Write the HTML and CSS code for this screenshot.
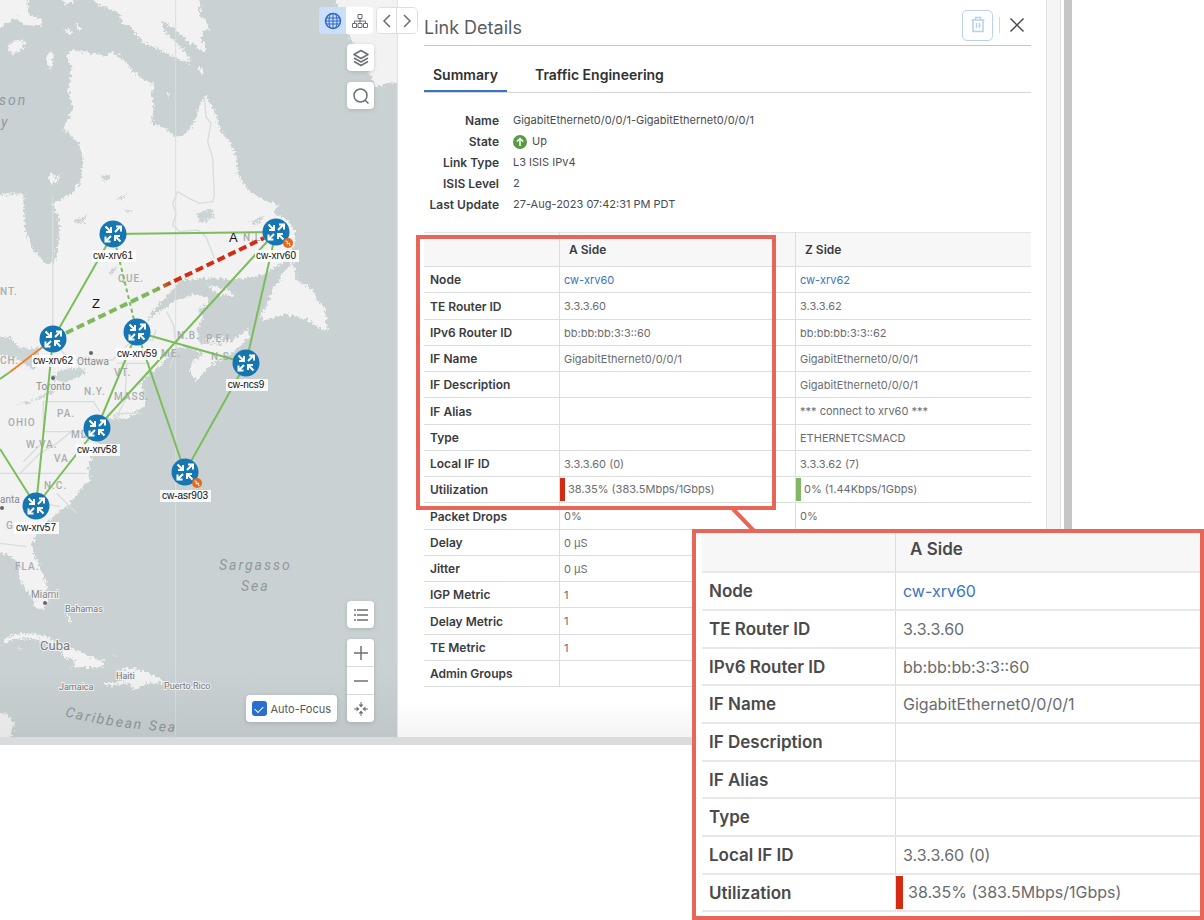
FILE: index.html
```html
<!DOCTYPE html>
<html lang="en">

<head>
    <meta charset="UTF-8">
    <meta name="viewport" content="width=device-width, initial-scale=1.0">
    <title>Link Details</title>
    <link rel="stylesheet" href="styles.css">
</head>

<body>
    <div class="app">
        <!-- Topology map -->
        <section class="map" aria-label="Topology map">
            <svg class="map-canvas" viewBox="0 0 398 737" preserveAspectRatio="xMinYMin slice">
                <defs>
                    <filter id="coast" x="0" y="0" width="100%" height="100%" color-interpolation-filters="sRGB">
                        <feTurbulence type="fractalNoise" baseFrequency="0.12" numOctaves="3" seed="4" />
                        <feDisplacementMap in="SourceGraphic" scale="24" xChannelSelector="R" yChannelSelector="G" />
                    </filter>
                    <linearGradient id="hot" gradientUnits="userSpaceOnUse" x1="53" y1="339" x2="276" y2="232">
                        <stop offset="0.46" stop-color="#7cb95c" />
                        <stop offset="0.53" stop-color="#d42c12" />
                    </linearGradient>
                    <linearGradient id="shade" x1="0" y1="0" x2="0" y2="1">
                        <stop offset="0" stop-color="#000" stop-opacity="0" />
                        <stop offset="1" stop-color="#000" stop-opacity="0.05" />
                    </linearGradient>
                    <symbol id="router" viewBox="-14 -14 28 28">
                        <circle r="13.5" fill="#1676b2" />
                        <g fill="none" stroke="#fff" stroke-width="2">
                            <path d="M-7.5-7.5l5 5M-2-7v5h-5" />
                            <path d="M2-2l5-5M3-7.5h5v5" />
                            <path d="M-2 2l-5 5M-7.5 2.5v5h5" />
                            <path d="M7.5 7.5l-5-5M2 7v-5h5" />
                        </g>
                    </symbol>
                    <symbol id="alarm" viewBox="-5 -5 10 10">
                        <circle r="5" fill="#e8681c" />
                        <path d="M-2.5-2l2 .5-.5 2.5 2.5-1 0 2.5M1 2l1.5.5" fill="none" stroke="#fff" stroke-width="1" />
                    </symbol>
                    <path id="caribbean" d="M65 716q50 14 130 17" />
                </defs>

                <!-- Land, drawn on a grid three times finer than the map -->
                <g transform="scale(.33333)">
                    <g class="land" filter="url(#coast)">
                        <path d="M-20-20H80L88 45 130 60 118 78 70 75 50 55 20 70-20 95zM165-20h70l-18 28-20 5z" />
                        <path d="M22 140l15-15 45-5-12 22-30 25zM137 175l12-20 12 10-5 30-8 15zM190 90l12-5 15 12-12 10zM226 72l8 0 10 15-10 2zM500 275l13 5-8 12zM590 203l15-3 8 20-8 2zM145 530l15-10 5 18 18-18-10 24-20 8z" />
                        <path d="M250-20L295 15 350 35 370 70 400 85 410 105 430 130 470 145 520 170 570 190 572 178 545 145 490 90 485 65 510 75 560 120 600 150 620 155 605 120 610 95 625 90 620 60 600 50 600-20z" />
                        <path d="M998-20L1020 40 1050 110 1090 190 1110 220 1128 265 1160 250 1200 245V-20z" />
                        <path d="M200 165L215 150 270 158 315 168 340 155 370 180 400 215 430 240 462 250 455 290 462 320 455 370 490 380 530 412 550 405 575 380 590 350 600 310 615 285 640 325 655 365 665 400 690 430 710 470 712 520 745 570 790 600 835 615 820 635 860 660 885 690 885 730 845 790 790 825 700 840 640 835 540 840 500 890 460 930 440 965 470 940 530 900 580 885 620 890 625 910 590 930 610 950 590 985 600 1030 660 1035 700 1020 740 990 750 1010 720 1040 680 1070 640 1090 610 1120 590 1140 570 1120 575 1090 610 1060 560 1040 520 1050 480 1100 440 1125 425 1150 435 1195 435 1220 400 1235 360 1245 320 1255 290 1305 290 1340 270 1380 265 1410 270 1440 250 1460 200 1520 170 1540 120 1590 95 1630 105 1670 120 1705 130 1725 140 1760 145 1800 130 1825 110 1830 95 1790 70 1760 55 1730 60 1690 40 1675 15 1660-20 1665V583H70L75 690 100 750 140 795 165 785 175 730 180 690 175 650 158 610 215 580 245 540 248 470 235 430 190 385 220 330 205 270 215 200z" />
                        <path d="M880 785L890 840 940 870 950 900 975 920 983 992 950 980 920 958 860 943 790 960 780 948 800 916 820 868 850 818zM620 855l70 15 12 20-52-10zM610 1018l50-5 30 12-40 8zM330 1258l50-18 40-3-40 16z" />
                        <path d="M5 1935L20 1910 70 1898 130 1905 190 1935 260 1965 320 1990 300 2002 215 2002 230 1980 190 1970 180 1945 120 1920 80 1915 40 1920z" />
                        <path d="M345 2010L400 2005 440 2015 480 2035 495 2050 440 2050 405 2070 390 2050 315 2058 315 2046 365 2045 370 2025zM530 2056l40 2 20 6-40 4zM195 1840l15 8 0 25-5-15zM50 1942l12 2-4 8zM338 1966l15 2-10 3zM-20 2136l40 6 22 22-2 18-12 50h-50z" />
                    </g>
                    <g class="lake" filter="url(#coast)">
                        <path d="M300 530l20-8 10 15-20 6zM348 595l30-10-10 15zM375 625l20 5-12 8zM220 662l40-16-8 20-22 8zM590 640l45-14 10 25-45 18zM750 665l50-20-30 30zM325 820l25-25-8 25-12 5z" />
                        <path d="M-20 1015l50-5 30 35 50 0 20 40-30 25-40-30-50-15h-30zM150 1140l30-30 70-5 10 15-60 25zM40 1215l60-12 55-38 10 10-40 20-50 20zM310 780l4 4-4 6z" />
                    </g>
                    <g class="borders">
                        <path d="M613 290l5 60 15 20-10 55 15 50 5 110-5 20-40 5-30-15-35-20-15 35 10 30-10 35 20 20 55-5 25 20 25 65" />
                        <path d="M158 590v430l50 60 130 0 60-60 60 0 10-30M500 935l20 40 10 70-20 60M350 1090l100 0M345 1240l80 0M130 1205h150l20 30M130 1205v120l-60 60M130 1295l110 0 30 30M0 1420h260M60 1420l60-60 50-30 50-40M380 1090l-5 110-30 60M170 1480l60 60M0 1630l80 10M70 1500l110 20" />
                    </g>
                    <path class="meridian" d="M527 0v2211" />
                </g>

                <g class="sea">
                    <text x="-1" y="105">son</text>
                    <text x="1" y="127">y</text>
                    <text x="219" y="570">Sargasso</text>
                    <text x="241" y="591">Sea</text>
                    <text><textPath href="#caribbean">Caribbean Sea</textPath></text>
                </g>
                <g class="state">
                    <text x="118" y="282">QUE.</text>
                    <text x="0" y="295">NT.</text>
                    <text x="243" y="241">N.L.</text>
                    <text x="177" y="339">N.B.</text>
                    <text x="206" y="342">P.E.I.</text>
                    <text x="211" y="360">N.S.</text>
                    <text x="161" y="357">ME.</text>
                    <text x="114" y="376">VT.</text>
                    <text x="0" y="364">CH.</text>
                    <text x="84" y="395">N.Y.</text>
                    <text x="114" y="400">MASS.</text>
                    <text x="57" y="417">PA.</text>
                    <text x="8" y="426">OHIO</text>
                    <text x="71" y="438">MD.</text>
                    <text x="26" y="448">W.VA.</text>
                    <text x="54" y="462">VA.</text>
                    <text x="44" y="489">N.C.</text>
                    <text x="6" y="529">G</text>
                    <text x="15" y="570">FLA.</text>
                </g>
                <g class="place">
                    <text class="city" x="77" y="365">Ottawa</text>
                    <text class="city" x="36" y="390">Toronto</text>
                    <text class="city" x="0" y="503">anta</text>
                    <text class="city" x="31" y="598">Miami</text>
                    <text x="65" y="612">Bahamas</text>
                    <text class="country" x="40" y="650">Cuba</text>
                    <text x="116" y="679">Haiti</text>
                    <text x="59" y="690">Jamaica</text>
                    <text x="164" y="689">Puerto Rico</text>
                </g>
                <g fill="#666">
                    <circle cx="91" cy="353" r="2" />
                    <circle cx="53" cy="378" r="2" />
                    <circle cx="2" cy="508" r="2" />
                    <circle cx="45" cy="603" r="2" />
                </g>

                <!-- Links -->
                <g class="link">
                    <path d="M113 234L276 232M113 234L53 339M276 232L97 428M276 232L246 363M137 332L246 363M137 332L97 428M137 332L185 472M246 363L185 472M53 339L36 506M97 428L36 506M36 506L0 449M0 379l10-7" />
                    <path class="warm" d="M10 372L53 339" />
                    <path stroke-dasharray="4 3" d="M113 234L137 332" />
                    <path class="selected" stroke="url(#hot)" d="M66 333L264 238" />
                </g>
                <g class="end">
                    <text x="229" y="242">A</text>
                    <text x="92" y="308">Z</text>
                </g>

                <!-- Devices -->
                <g class="device">
                    <use href="#router" x="99" y="220" width="28" height="28" />
                    <use href="#router" x="262" y="218" width="28" height="28" />
                    <use href="#router" x="123" y="318" width="28" height="28" />
                    <use href="#router" x="39" y="325" width="28" height="28" />
                    <use href="#router" x="232" y="349" width="28" height="28" />
                    <use href="#router" x="83" y="414" width="28" height="28" />
                    <use href="#router" x="171" y="458" width="28" height="28" />
                    <use href="#router" x="22" y="492" width="28" height="28" />
                    <use href="#alarm" x="283" y="238" width="10" height="10" />
                    <use href="#alarm" x="192" y="478" width="10" height="10" />
                    <path fill="#fff" fill-opacity=".85" d="M92 250h44v12H92zM255 250h44v12h-44zM116 348h44v12h-44zM32 355h44v12H32zM226 379h42v12h-42zM76 444h44v12H76zM160 490h51v12h-51zM14 522h45v12H14z" />
                    <text x="113" y="259">cw-xrv61</text>
                    <text x="276" y="259">cw-xrv60</text>
                    <text x="137" y="357">cw-xrv59</text>
                    <text x="53" y="364">cw-xrv62</text>
                    <text x="246" y="388">cw-ncs9</text>
                    <text x="97" y="453">cw-xrv58</text>
                    <text x="185" y="499">cw-asr903</text>
                    <text x="36" y="531">cw-xrv57</text>
                </g>
                <rect y="667" width="398" height="70" fill="url(#shade)" />
            </svg>

            <div class="map-top">
                <div class="group">
                    <button class="tool active" aria-label="Geographical map">
                        <svg width="18" height="18" viewBox="0 0 18 18">
                            <circle cx="9" cy="9" r="7.5" />
                            <path stroke-width="1" d="M2 6h14M2 12h14M1.5 9h15M9 1.5v15M6.5 2C4.500 6 4.500 12 6.500 16M11.5 2c2 4 2 10 0 14" />
                        </svg>
                    </button>
                    <button class="tool" aria-label="Logical map">
                        <svg width="16" height="16" viewBox="0 0 16 16">
                            <path stroke-width="1" d="M6 1.500h4v4H6zM.5 10.500h4v4h-4zM6 10.500h4v4H6zM11.500 10.500h4v4h-4zM8 5.500v5M2.500 10.500v-2.500h11v2.500" />
                        </svg>
                    </button>
                </div>
                <div class="group pager">
                    <button aria-label="Collapse"><svg width="10" height="16" viewBox="0 0 10 16"><path d="M8 2L2 8l6 6" /></svg></button>
                    <button aria-label="Expand"><svg width="10" height="16" viewBox="0 0 10 16"><path d="M2 2l6 6-6 6" /></svg></button>
                </div>
            </div>

            <div class="map-side">
                <button class="tool card" aria-label="Layers">
                    <svg width="18" height="18" viewBox="0 0 18 18">
                        <path d="M9 1.500l7 4-7 4-7-4zM2 9l7 4 7-4M2 12.500l7 4 7-4" stroke-linejoin="round" />
                    </svg>
                </button>
                <button class="tool card" aria-label="Search">
                    <svg width="18" height="18" viewBox="0 0 18 18"><circle cx="8.5" cy="8.5" r="6.5" /><path d="M13 13l3.500 3.500" /></svg>
                </button>
            </div>

            <div class="map-bottom">
                <label class="card auto-focus"><input type="checkbox" checked> Auto-Focus</label>
                <div class="stack">
                    <button class="tool card" aria-label="Legend">
                        <svg width="16" height="14" viewBox="0 0 16 14"><path d="M1 2h2M4 2h11M1 7h2M4 7h11M1 12h2M4 12h11" /></svg>
                    </button>
                    <div class="card zoom">
                        <button class="tool" aria-label="Zoom in"><svg width="16" height="16" viewBox="0 0 16 16"><path d="M8 1v14M1 8h14" /></svg></button>
                        <button class="tool" aria-label="Zoom out"><svg width="16" height="16" viewBox="0 0 16 16"><path d="M1 8h14" /></svg></button>
                        <button class="tool" aria-label="Fit to view">
                            <svg width="16" height="16" viewBox="0 0 16 16">
                                <path stroke-width="1" d="M8 1v4M8 15v-4M1 8h4M15 8h-4" />
                                <path fill="#6b6f74" stroke="none" d="M5.500 3.500h5L8 6.500zM5.500 12.500h5L8 9.500zM3.500 5.500v5L6.500 8zM12.500 5.500v5L9.500 8z" />
                            </svg>
                        </button>
                    </div>
                </div>
            </div>
        </section>

        <!-- Details of the selected link -->
        <main class="details">
            <header class="details-head">
                <h1>Link Details</h1>
                <button class="delete" aria-label="Delete">
                    <svg width="16" height="18" viewBox="0 0 16 18"><path d="M1.500 4h13M3 4v11.500h10V4M5.500 4V1.500h5V4M6.500 7v5M9.500 7v5" /></svg>
                </button>
                <button class="close" aria-label="Close">
                    <svg width="16" height="16" viewBox="0 0 16 16"><path d="M1.500 1.500l13 13M14.500 1.500l-13 13" /></svg>
                </button>
            </header>
            <nav class="tabs">
                <a href="#summary" class="current">Summary</a>
                <a href="#te">Traffic Engineering</a>
            </nav>

            <dl class="facts">
                <dt>Name</dt>
                <dd>GigabitEthernet0/0/0/1-GigabitEthernet0/0/0/1</dd>
                <dt>State</dt>
                <dd class="state-up"><svg width="14" height="14" viewBox="0 0 14 14"><circle cx="7" cy="7" r="7" fill="#579b42" /><path d="M7 11V3.500M3.800 6.500L7 3.500l3.200 3" fill="none" stroke="#fff" stroke-width="1.5" /></svg> Up</dd>
                <dt>Link Type</dt>
                <dd>L3 ISIS IPv4</dd>
                <dt>ISIS Level</dt>
                <dd>2</dd>
                <dt>Last Update</dt>
                <dd>27-Aug-2023 07:42:31 PM PDT</dd>
            </dl>

            <div class="sides-wrap">
                <table class="sides">
                    <thead>
                        <tr><td></td><th scope="col">A Side</th><th scope="col">Z Side</th></tr>
                    </thead>
                    <tbody>
                        <tr><th scope="row">Node</th><td><a href="#xrv60">cw-xrv60</a></td><td><a href="#xrv62">cw-xrv62</a></td></tr>
                        <tr><th scope="row">TE Router ID</th><td>3.3.3.60</td><td>3.3.3.62</td></tr>
                        <tr><th scope="row">IPv6 Router ID</th><td>bb:bb:bb:3:3::60</td><td>bb:bb:bb:3:3::62</td></tr>
                        <tr><th scope="row">IF Name</th><td>GigabitEthernet0/0/0/1</td><td>GigabitEthernet0/0/0/1</td></tr>
                        <tr><th scope="row">IF Description</th><td></td><td>GigabitEthernet0/0/0/1</td></tr>
                        <tr><th scope="row">IF Alias</th><td></td><td>*** connect to xrv60 ***</td></tr>
                        <tr><th scope="row">Type</th><td></td><td>ETHERNETCSMACD</td></tr>
                        <tr><th scope="row">Local IF ID</th><td>3.3.3.60 (0)</td><td>3.3.3.62 (7)</td></tr>
                        <tr><th scope="row">Utilization</th><td class="usage"><span class="high">38.35% (383.5Mbps/1Gbps)</span></td><td class="usage"><span>0% (1.44Kbps/1Gbps)</span></td></tr>
                        <tr><th scope="row">Packet Drops</th><td>0%</td><td>0%</td></tr>
                        <tr><th scope="row">Delay</th><td>0 µS</td><td></td></tr>
                        <tr><th scope="row">Jitter</th><td>0 µS</td><td></td></tr>
                        <tr><th scope="row">IGP Metric</th><td>1</td><td></td></tr>
                        <tr><th scope="row">Delay Metric</th><td>1</td><td></td></tr>
                        <tr><th scope="row">TE Metric</th><td>1</td><td></td></tr>
                        <tr><th scope="row">Admin Groups</th><td></td><td></td></tr>
                    </tbody>
                </table>
                <!-- Marked area and the line to its enlarged view -->
                <div class="marker"></div>
                <svg class="marker-line" width="28" height="24" viewBox="0 0 28 24"><path d="M3 0l22 23" stroke="#e8655a" stroke-width="4" /></svg>
            </div>
        </main>
        <div class="gutter"></div>
    </div>

    <!-- Enlarged view -->
    <aside class="callout">
        <table class="sides large">
            <thead>
                <tr><td></td><th scope="col">A Side</th></tr>
            </thead>
            <tbody>
                <tr><th scope="row">Node</th><td><a href="#xrv60">cw-xrv60</a></td></tr>
                <tr><th scope="row">TE Router ID</th><td>3.3.3.60</td></tr>
                <tr><th scope="row">IPv6 Router ID</th><td>bb:bb:bb:3:3::60</td></tr>
                <tr><th scope="row">IF Name</th><td>GigabitEthernet0/0/0/1</td></tr>
                <tr><th scope="row">IF Description</th><td></td></tr>
                <tr><th scope="row">IF Alias</th><td></td></tr>
                <tr><th scope="row">Type</th><td></td></tr>
                <tr><th scope="row">Local IF ID</th><td>3.3.3.60 (0)</td></tr>
                <tr><th scope="row">Utilization</th><td class="usage"><span class="high">38.35% (383.5Mbps/1Gbps)</span></td></tr>
            </tbody>
        </table>
    </aside>
</body>

</html>
```
FILE: styles.css
```css
* {
    box-sizing: border-box;
}

body {
    margin: 0;
    position: relative;
    min-height: 100vh;
    background: #fff;
    color: #4a4c4f;
    font-family: Inter, "Liberation Sans", sans-serif;
    font-size: 11px;
}

button {
    padding: 0;
    border: 0;
    background: #fff;
    cursor: pointer;
}

button svg {
    display: block;
    margin: auto;
    fill: none;
    stroke: #6b6f74;
    stroke-width: 1.5;
}

a {
    color: #3b73c4;
    text-decoration: none;
}

.app {
    display: flex;
    margin-right: 132px;
    border-bottom: 8px solid #dadbdc;
}

/* Map */
.map {
    position: relative;
    flex: 0 0 398px;
    background: #c9d1d3;
    border-right: 1px solid #dfe3e4;
}

.map-canvas {
    position: absolute;
    width: 100%;
    height: 100%;
}

.land {
    fill: #f1f2f1;
}

.lake {
    fill: #cdd4d6;
}

.borders {
    fill: none;
    stroke: #d9dcdd;
    stroke-width: 4;
}

.meridian {
    stroke: #dadfe1;
    stroke-width: 3;
}

.sea {
    fill: #8f999d;
    font: italic 14px Roboto, sans-serif;
    letter-spacing: 2px;
}

.state {
    fill: #a9adb0;
    font: 500 10px Roboto, sans-serif;
    letter-spacing: 1px;
}

.place {
    fill: #74787c;
    stroke: #f0f1f1;
    stroke-width: 2;
    paint-order: stroke;
    font: 9px Roboto, sans-serif;
}

.place .city {
    font-size: 10px;
    fill: #888c90;
}

.place .country {
    font-size: 13px;
}

.link {
    fill: none;
    stroke: #7cbd5b;
    stroke-width: 2;
}

.link .warm {
    stroke: #f08030;
}

.link .selected {
    stroke-width: 4;
    stroke-dasharray: 8 4;
}

.end {
    fill: #111;
    font: 13px "Liberation Sans", sans-serif;
}

.device text {
    fill: #111;
    font: 10px "Liberation Sans", sans-serif;
    text-anchor: middle;
}

/* Map controls */
.map-top {
    position: absolute;
    z-index: 1;
    top: 7px;
    right: -21px;
    display: flex;
    gap: 3px;
}

.group {
    display: flex;
    border-radius: 4px;
    overflow: hidden;
}

.tool {
    width: 27px;
    height: 27px;
}

.tool.active {
    background: #cbdffb;
}

.tool.active svg {
    stroke: #2c67bf;
}

.pager {
    border: 1px solid #dcdfe2;
    border-radius: 5px;
}

.pager button {
    width: 19px;
    height: 25px;
}

.pager button + button {
    width: 21px;
    border-left: 1px solid #dcdfe2;
}

.card {
    background: #fff;
    border-radius: 4px;
    box-shadow: 0 1px 4px rgba(0, 0, 0, 0.15);
}

.map-side {
    position: absolute;
    top: 44px;
    right: 23px;
    display: grid;
    gap: 11px;
}

.map-bottom {
    position: absolute;
    right: 23px;
    bottom: 15px;
    display: flex;
    align-items: flex-end;
    gap: 10px;
}

.stack {
    display: grid;
    gap: 11px;
}

.zoom {
    display: grid;
    gap: 1px;
    background: #d8dadc;
    overflow: hidden;
}

.auto-focus {
    display: flex;
    align-items: center;
    gap: 4px;
    height: 27px;
    padding: 0 6px;
    color: #55585c;
}

.auto-focus input {
    appearance: none;
    width: 15px;
    height: 15px;
    margin: 0;
    border-radius: 3px;
    background: #2a6fd0;
    display: grid;
    place-items: center;
}

.auto-focus input::after {
    content: "";
    width: 7px;
    height: 4px;
    border: solid #fff;
    border-width: 0 0 1px 1px;
    transform: rotate(-45deg);
}

/* Details panel */
.details {
    flex: 1;
    min-width: 0;
    padding: 0 15px 50px 26px;
    background: linear-gradient(#fff 95%, #f4f4f4);
}

.details-head {
    display: flex;
    align-items: center;
    height: 46px;
    padding: 5px 6px 0 0;
    border-bottom: 1px solid #c4c6c8;
}

.details-head h1 {
    flex: 1;
    margin: 0;
    padding-top: 5px;
    color: #5a5c5f;
    font-size: 18px;
    font-weight: 400;
    line-height: 24px;
}

.delete {
    width: 31px;
    height: 31px;
    border: 1px solid #b9d2f0;
    border-radius: 5px;
}

.delete svg {
    stroke: #b7d0f0;
}

.close {
    margin-left: 6px;
    padding-left: 9px;
    border-left: 1px solid #d8d9da;
}

.close svg {
    stroke: #4a4c4f;
}

.tabs {
    display: flex;
    gap: 19px;
    border-bottom: 1px solid #d5d7d9;
}

.tabs a {
    padding: 18px 9px 5px;
    border-bottom: 2px solid transparent;
    color: #2f3134;
    font-size: 14px;
    font-weight: 600;
    line-height: 21px;
}

.tabs .current {
    border-color: #3b73bf;
}

.facts {
    display: grid;
    grid-template-columns: 75px 1fr;
    column-gap: 14px;
    margin: 17px 0;
    line-height: 21px;
}

.facts dt {
    color: #3a3c3f;
    font-size: 12px;
    font-weight: 600;
    text-align: right;
}

.facts dd {
    margin: 0;
}

.state-up {
    display: flex;
    align-items: center;
    gap: 5px;
}

.sides-wrap {
    position: relative;
}

.sides {
    width: 100%;
    table-layout: fixed;
    border-spacing: 0;
    color: #6a6c70;
}

.sides td,
.sides th {
    height: 26px;
    padding: 0 0 0 4px;
    border-bottom: 1px solid #dcdddf;
    text-align: left;
    font-weight: 400;
    white-space: nowrap;
}

.sides tbody tr:nth-child(4n+2) td {
    height: 27px;
}

.sides tbody th,
.sides thead th {
    color: #3a3c3f;
    font-size: 12px;
    font-weight: 600;
}

.sides tbody th {
    padding-left: 6px;
}

.sides thead td,
.sides thead th {
    height: 35px;
    border-top: 1px solid #e3e4e5;
    background: #f7f7f7;
}

.sides thead td {
    width: 135px;
}

.sides thead th {
    padding-left: 9px;
}

.sides td + td,
.sides th + td,
.sides th + th,
.sides td + th {
    border-left: 1px solid #dcdddf;
}

.sides .usage {
    padding-left: 0;
}

.usage span {
    display: block;
    padding-left: 3px;
    border-left: 5px solid #83b766;
    line-height: 23px;
}

.usage .high {
    border-color: #d42c12;
}

.gutter {
    width: 26px;
    background: #f5f5f5;
    border-left: 1px solid #e0e1e2;
    border-right: 8px solid #c6c6c6;
    box-shadow: inset -3px 0 #fff, inset -4px 0 #dfdfdf;
}

/* Enlarged view */
.marker {
    position: absolute;
    top: 3px;
    left: -8px;
    width: 360px;
    height: 275px;
    border: 4px solid #e8655a;
}

.marker-line {
    position: absolute;
    top: 277px;
    left: 306px;
}

.callout {
    position: absolute;
    top: 529px;
    left: 692px;
    right: 0;
    padding: 0 0 4px 6px;
    border: 4px solid #e8655a;
    background: #fff;
}

.large {
    font-size: 16px;
}

.large td,
.large th {
    height: 38px;
    padding-left: 7px;
    border-bottom-width: 2px;
    border-color: #e8e8e8;
}

.large tbody th,
.large thead th {
    padding-left: 7px;
    color: #4a4a4c;
    font-size: 17px;
}

.large tbody tr:nth-child(n) td {
    height: 38px;
}

.large tbody tr:nth-child(3n) td,
.large tbody tr:nth-child(3n) th {
    height: 37px;
}

.large thead td,
.large thead th {
    height: 40px;
    padding-bottom: 6px;
    border-top: 0;
}

.large thead td {
    width: 193px;
}

.large thead th {
    padding-left: 14px;
}

.large .usage span {
    padding-left: 5px;
    border-left-width: 7px;
    line-height: 33px;
}
```
